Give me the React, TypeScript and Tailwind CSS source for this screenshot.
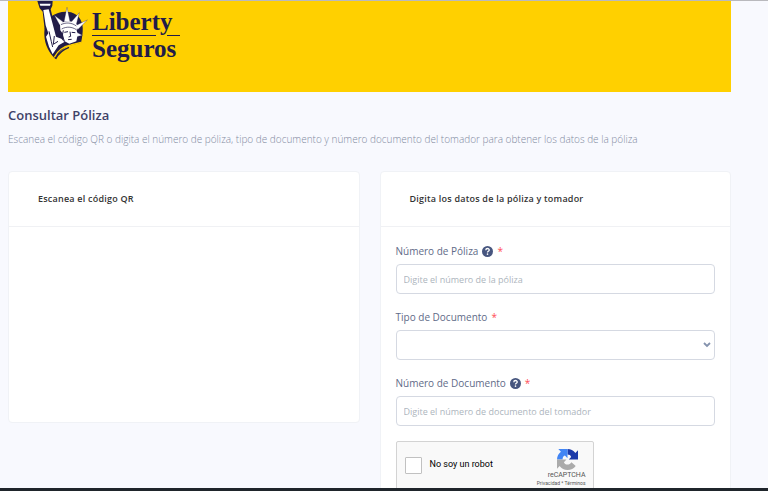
import type { ReactNode } from "react";

type CardProps = {
  children?: ReactNode;
  className?: string;
  title: string;
};

type FieldLabelProps = {
  hasHelp?: boolean;
  htmlFor: string;
  text: string;
};

const INPUT_CLASSES =
  "block h-[30px] w-full rounded-[4px] border border-[#d5d9e2] bg-white px-[7px] text-[9px] text-[#525f7f] placeholder:text-[#adb5bd] placeholder:opacity-100";

function LibertyMark() {
  return (
    <svg
      className="h-[59px] w-[52px] shrink-0"
      viewBox="108 0 156 177"
      aria-hidden="true"
    >
      <path
        d="M154 46C170 34 193 29 213 34C239 41 251 66 248 92C247 106 245 116 243 125L208 134C190 139 177 154 166 174C147 155 134 131 133 102C132 84 137 67 144 57Z"
        fill="#221c48"
      />
      <path
        d="M112 0H158L157 14L152 25L158 50L142 78L134 86L128 32L119 22Z"
        fill="#221c48"
      />
      <path d="M119 8H152L150 14H121Z" fill="#fff" />
      <path
        d="M130 27L146 25L151 43L161 80L168 107L184 113L193 123L176 133L158 160L147 137L138 107L145 97L137 73Z"
        fill="#fff"
      />
      <path
        d="M147 91L154 122L158 138M163 105L160 130L174 121"
        fill="none"
        stroke="#221c48"
        strokeWidth="3"
      />
      <path
        d="M179 72L163 43L191 64ZM192 62L201 19L210 62ZM213 64L238 35L228 74ZM226 74L262 57L233 86ZM230 94L247 103L230 107Z"
        fill="#fff"
        stroke="#221c48"
        strokeWidth="1"
      />
      <path
        d="M180 70C192 57 220 57 232 73L230 88L233 101L229 121L208 128L191 119L189 99L181 88Z"
        fill="#fff"
      />
      <path
        d="M183 71C198 63 216 65 229 75M185 84C199 76 216 77 229 86"
        fill="none"
        stroke="#221c48"
        strokeWidth="2"
      />
      <path
        d="M193 94L204 92M215 94L226 95M210 92L212 106L206 108M204 116L215 115M190 88L187 103L193 120"
        fill="none"
        stroke="#221c48"
        strokeWidth="3"
      />
      <path
        d="M163 169C174 147 188 138 213 132L243 124"
        fill="none"
        stroke="#ffd000"
        strokeWidth="4"
      />
      <path
        d="M167 174C177 154 188 146 207 139"
        fill="none"
        stroke="#221c48"
        strokeWidth="4"
      />
    </svg>
  );
}

function LibertyWordmark() {
  return (
    <div className="relative font-['Liberation_Serif',serif] text-[25px] leading-[27px] font-bold text-[#221c48]">
      <p>Liberty</p>
      <p>Seguros</p>
      <svg
        className="absolute top-[27px] left-0 h-px w-[88px]"
        viewBox="0 0 88 1"
        aria-hidden="true"
      >
        <path d="M0 .5H64M75 .5H88" stroke="#221c48" />
      </svg>
    </div>
  );
}

function HelpIcon() {
  return (
    <svg className="h-[11px] w-[11px]" viewBox="0 0 22 22" aria-hidden="true">
      <circle cx="11" cy="11" r="11" fill="#47567f" />
      <path
        d="M7.5 8.5C7.7 3.8 14.6 4 14.5 8.2C14.4 10.7 11 10.5 11 13"
        fill="none"
        stroke="#fff"
        strokeWidth="2.6"
      />
      <circle cx="11" cy="16.3" r="1.6" fill="#fff" />
    </svg>
  );
}

function RecaptchaLogo() {
  return (
    <svg className="h-[21px] w-[21px]" viewBox="0 0 64 64" aria-hidden="true">
      <path
        d="M64 32V4L56 12C50 5 42 0 32 0V17C38 17 41 19 43 24L36 32Z"
        fill="#1c3aa9"
      />
      <path
        d="M32 0H4L12 8C5 13 0 22 0 32H17C17 26 19 22 24 20L32 28Z"
        fill="#4285f4"
      />
      <path
        d="M0 32V60L8 52C14 60 22 64 32 64C43 64 51 60 57 52L44 40C41 45 37 47 32 47C26 47 23 45 21 40L29 32Z"
        fill="#ababab"
      />
    </svg>
  );
}

function Card({ children, className = "", title }: CardProps) {
  return (
    <section
      className={`min-w-0 flex-1 rounded-[4px] border border-[#f0f2f6] bg-white ${className}`}
    >
      <header className="flex h-[55px] items-center border-b border-[#f0f1f4] px-[29px]">
        <h2 className="text-[9px] font-semibold tracking-wide text-[#333]">
          {title}
        </h2>
      </header>
      {children}
    </section>
  );
}

function FieldLabel({ hasHelp = false, htmlFor, text }: FieldLabelProps) {
  return (
    <label
      className="mb-[5px] flex h-4 items-center gap-1 text-[10px] leading-4 text-[#5f6b88]"
      htmlFor={htmlFor}
    >
      {text}
      {hasHelp && <HelpIcon />}
      <span className="text-[#ff4d55]">*</span>
    </label>
  );
}

function Recaptcha() {
  return (
    <div className="flex h-[51px] w-[198px] justify-between rounded-[2px] border border-[#d3d3d3] bg-[#f9f9f9] pr-[7px] pl-2">
      <label className="flex h-[46px] items-center gap-2 font-[Roboto,sans-serif] text-[9px] text-black">
        <input
          className="h-[17px] w-[17px] appearance-none rounded-[1px] border border-[#c1c1c1] bg-white"
          type="checkbox"
        />
        No soy un robot
      </label>
      <div className="flex flex-col items-end pt-[7px] font-[Roboto,sans-serif] text-[#555]">
        <div className="pr-2">
          <RecaptchaLogo />
        </div>
        <p className="text-[7px] leading-[10px]">reCAPTCHA</p>
        <p className="text-[5px] leading-[6px]">
          <a href="#privacidad">Privacidad</a> * <a href="#terminos">Términos</a>
        </p>
      </div>
    </div>
  );
}

export default function App() {
  return (
    <div className="flex h-screen flex-col overflow-hidden border-t border-b-3 border-t-[#b9b9bd] border-b-[#1f252b] bg-[#f8f9fe] font-['Open_Sans',sans-serif]">
      <div className="min-h-0 flex-1 overflow-hidden pr-[37px] pl-2">
        <header className="flex h-[91px] items-start gap-1 bg-[#ffd000] pl-7">
          <LibertyMark />
          <div className="pt-[7px]">
            <LibertyWordmark />
          </div>
        </header>

        <main className="pt-[11px]">
          <h1 className="text-[13px] leading-6 font-semibold text-[#3f4268]">
            Consultar Póliza
          </h1>
          <p className="mt-1 text-[10px] leading-4 font-light text-[#828a9e]">
            Escanea el código QR o digita el número de póliza, tipo de documento
            y número documento del tomador para obtener los datos de la póliza
          </p>

          <div className="mt-6 flex items-start gap-5">
            <Card className="min-h-[252px]" title="Escanea el código QR" />

            <Card title="Digita los datos de la póliza y tomador">
              <form className="flex flex-col gap-[15px] px-[15px] pt-4 pb-6">
                <div>
                  <FieldLabel hasHelp htmlFor="poliza" text="Número de Póliza" />
                  <input
                    className={INPUT_CLASSES}
                    id="poliza"
                    placeholder="Digite el número de la póliza"
                    type="text"
                  />
                </div>

                <div>
                  <FieldLabel htmlFor="tipo" text="Tipo de Documento" />
                  <div className="relative">
                    <select className={`${INPUT_CLASSES} appearance-none`} id="tipo">
                      <option value=""></option>
                    </select>
                    <svg
                      className="pointer-events-none absolute top-3 right-1 h-[6px] w-2"
                      viewBox="0 0 8 6"
                      aria-hidden="true"
                    >
                      <path
                        d="M1 1L4 4L7 1"
                        fill="none"
                        stroke="#8492ad"
                        strokeWidth="1.8"
                      />
                    </svg>
                  </div>
                </div>

                <div>
                  <FieldLabel
                    hasHelp
                    htmlFor="documento"
                    text="Número de Documento"
                  />
                  <input
                    className={INPUT_CLASSES}
                    id="documento"
                    placeholder="Digite el número de documento del tomador"
                    type="text"
                  />
                </div>

                <Recaptcha />
              </form>
            </Card>
          </div>
        </main>
      </div>
    </div>
  );
}
